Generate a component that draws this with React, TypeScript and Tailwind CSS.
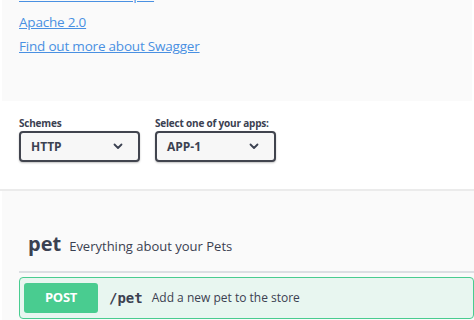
import React from "react";

function Chevron() {
  return (
    <svg width="10" height="7" viewBox="0 0 10 7" className="shrink-0">
      <path d="M1.5 1.5 L5 5 L8.5 1.5" fill="none" stroke="#3b4151" strokeWidth="1.8" strokeLinecap="round" strokeLinejoin="round" />
    </svg>
  );
}

function SelectBox({ value }: { value: string }) {
  return (
    <div className="w-[121px] h-[31px] border-2 border-[#41444e] rounded-[4px] shadow-[0_1px_2px_rgba(0,0,0,0.25)] bg-[#f7f7f7] flex items-center justify-between pl-[10px] pr-[15px]">
      <span className="text-[12px] font-bold text-[#3b4151]">{value}</span>
      <Chevron />
    </div>
  );
}

export default function App() {
  return (
    <div className="w-[474px] h-[320px] overflow-hidden bg-white flex flex-col" style={{ fontFamily: '"Open Sans", sans-serif' }}>
      <div className="ml-[2px] w-[470px] h-[101px] shrink-0 bg-[#fafafa] overflow-hidden">
        <div className="flex flex-col mt-[-17px] pl-[17px] text-[13.5px] tracking-[-0.2px] leading-[24px] text-[#4990e2]">
          <a className="underline mb-[3px]">Contact the developer</a>
          <a className="underline">Apache 2.0</a>
          <a className="underline">Find out more about Swagger</a>
        </div>
      </div>
      <div className="h-[90px] shrink-0 bg-white border-b-2 border-[#ebebeb] flex gap-[15px] pl-[19px] pt-[14px]">
        <div className="flex flex-col">
          <span className="text-[10px] font-bold text-[#3b4151] leading-[16px] tracking-[-0.2px]">Schemes</span>
          <SelectBox value="HTTP" />
        </div>
        <div className="flex flex-col">
          <span className="text-[10px] font-bold text-[#3b4151] leading-[16px] tracking-[-0.2px]">Select one of your apps:</span>
          <SelectBox value="APP-1" />
        </div>
      </div>
      <div className="ml-[2px] flex-1 bg-[#fafafa] pt-[38px] pl-[17px]">
        <div className="flex items-baseline gap-[8px] pl-[9px] pb-[12px] border-b-2 border-[#dcdfe3]">
          <span className="text-[20px] font-bold text-[#3b4151] leading-[30px]">pet</span>
          <span className="text-[13px] text-[#3b4151]">Everything about your Pets</span>
        </div>
        <div className="mt-[4px] border border-[#49cc90] rounded-[4px] bg-[#e8f6f0] flex items-center p-[5px] pl-[4px]">
          <div className="w-[74px] h-[30px] rounded-[3px] bg-[#49cc90] flex items-center justify-center text-white text-[13px] font-bold tracking-[-0.3px]">POST</div>
          <span className="ml-[11px] text-[14px] font-bold text-[#3b4151]" style={{ fontFamily: '"DejaVu Sans Mono", monospace' }}>/pet</span>
          <span className="ml-[9px] text-[12px] text-[#3b4151]">Add a new pet to the store</span>
        </div>
      </div>
    </div>
  );
}
